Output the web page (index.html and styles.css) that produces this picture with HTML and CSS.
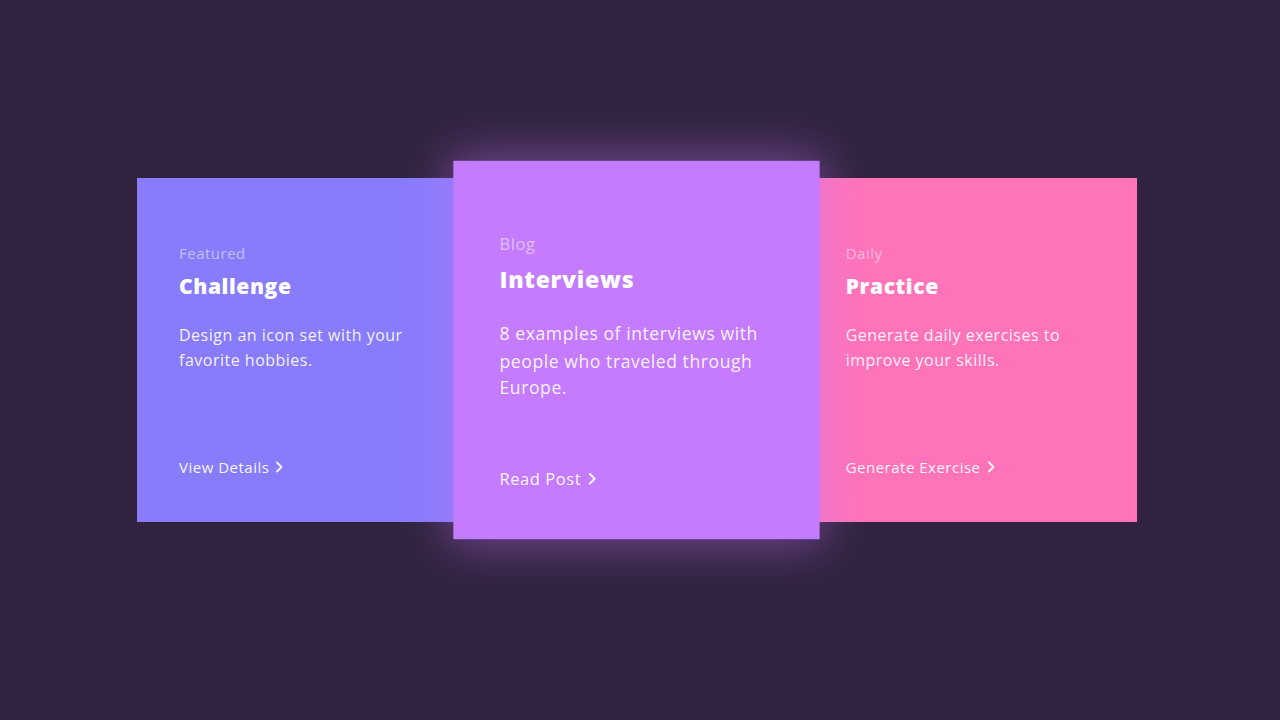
FILE: index.html
```html
<!DOCTYPE html>
<html lang="en">
<head>
<meta charset="utf-8">
<title>Cards</title>
<link rel="stylesheet" href="styles.css">
</head>
<body>
<main class="stage">
  <div class="cards">
    <article class="card card-featured">
      <span class="label">Featured</span>
      <h2 class="title">Challenge</h2>
      <p class="desc">Design an icon set with your favorite hobbies.</p>
      <a class="link" href="#">View Details <svg class="chev" viewBox="0 0 8 12" width="8" height="12"><path d="M2 1.5l4.5 4.5-4.5 4.5" fill="none" stroke="currentColor" stroke-width="1.8" stroke-linecap="round" stroke-linejoin="round"/></svg></a>
    </article>
    <article class="card card-blog">
      <span class="label">Blog</span>
      <h2 class="title">Interviews</h2>
      <p class="desc">8 examples of interviews with people who traveled through Europe.</p>
      <a class="link" href="#">Read Post <svg class="chev" viewBox="0 0 8 12" width="8" height="12"><path d="M2 1.5l4.5 4.5-4.5 4.5" fill="none" stroke="currentColor" stroke-width="1.8" stroke-linecap="round" stroke-linejoin="round"/></svg></a>
    </article>
    <article class="card card-daily">
      <span class="label">Daily</span>
      <h2 class="title">Practice</h2>
      <p class="desc">Generate daily exercises to improve your skills.</p>
      <a class="link" href="#">Generate Exercise <svg class="chev" viewBox="0 0 8 12" width="8" height="12"><path d="M2 1.5l4.5 4.5-4.5 4.5" fill="none" stroke="currentColor" stroke-width="1.8" stroke-linecap="round" stroke-linejoin="round"/></svg></a>
    </article>
  </div>
</main>
</body>
</html>
```

FILE: styles.css
```css
* { box-sizing: border-box; }
html, body { margin: 0; padding: 0; }
body {
  background: #31233f;
  width: 1280px;
  height: 720px;
  overflow: hidden;
  font-family: "Open Sans", "Noto Sans", sans-serif;
  color: #fff;
}
.stage {
  padding: 178px 0 0 137px;
}
.cards {
  display: flex;
  width: 1000px;
}
.card {
  width: 333.33px;
  height: 344px;
  display: flex;
  flex-direction: column;
  padding: 64px 42px 44px;
  position: relative;
}
.card-featured { background: #897cfb; }
.card-blog {
  background: #c47bfd;
  transform: scale(1.1);
  z-index: 2;
  box-shadow: 0 0 40px 4px rgba(196, 123, 253, 0.45);
}
.card-daily { background: #ff74b9; }
.label {
  display: block;
  font-size: 15px;
  line-height: 22px;
  letter-spacing: 0.5px;
  color: rgba(255, 255, 255, 0.5);
}
.title {
  margin: 7px 0 0;
  font-size: 21px;
  line-height: 30px;
  font-weight: 800;
  letter-spacing: 0.6px;
}
.desc {
  margin: 22px 0 0;
  font-size: 16px;
  line-height: 24.5px;
  letter-spacing: 0.5px;
  color: rgba(255, 255, 255, 0.92);
}
.link {
  margin-top: auto;
  display: flex;
  align-items: center;
  gap: 6px;
  font-size: 15px;
  line-height: 22px;
  letter-spacing: 0.5px;
  color: rgba(255, 255, 255, 0.95);
  text-decoration: none;
}
.chev { display: block; }
```
